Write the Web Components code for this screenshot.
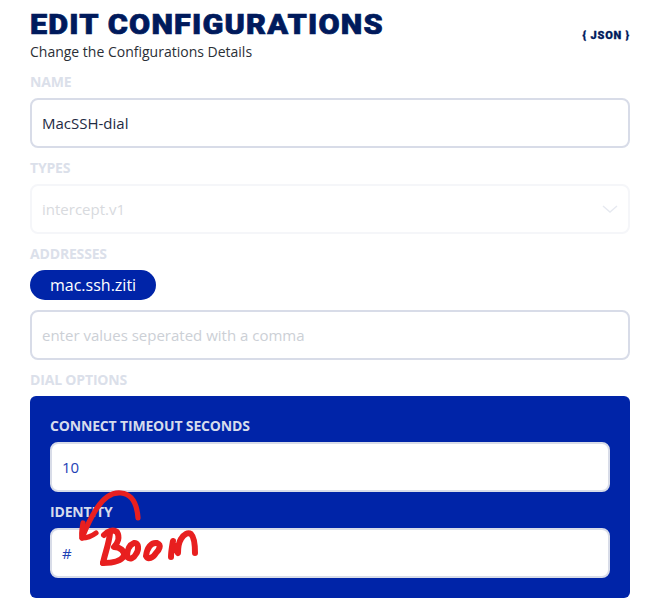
<!DOCTYPE html>
<html><head><meta charset="utf-8"><style>
html,body{margin:0;background:#fff}
body{font-family:"Open Sans",sans-serif}
</style></head><body>
<edit-config></edit-config>
<script>
const base=':host{display:block;box-sizing:border-box}*{box-sizing:border-box}';
class FieldLabel extends HTMLElement{constructor(){super();this.attachShadow({mode:'open'}).innerHTML=`<style>${base}:host{font:700 14px/20px "Open Sans",sans-serif;letter-spacing:-.17px;color:var(--label,#dbe0ea);text-transform:uppercase;margin-bottom:6px}</style><slot></slot>`}}
class TextBox extends HTMLElement{constructor(){super();this.attachShadow({mode:'open'}).innerHTML=`<style>${base}:host{height:50px;border:2px solid #d8dce8;border-radius:8px;background:#fff;font:400 15px/46px "Open Sans",sans-serif;color:var(--ink,#1e2a44);padding:0 10px;display:flex;align-items:center;justify-content:space-between}:host([placeholder]){color:#ccd0d6}:host([disabled]){border-color:#f5f6f9;color:#d8dade}svg{display:block}</style><slot></slot>`}}
class AddrChip extends HTMLElement{constructor(){super();this.attachShadow({mode:'open'}).innerHTML=`<style>${base}:host{display:inline-block;height:30px;border-radius:15px;background:#0024a8;color:#fff;font:500 16px/30px "Open Sans",sans-serif;padding:0 20px}</style><slot></slot>`}}
class DialPanel extends HTMLElement{constructor(){super();this.attachShadow({mode:'open'}).innerHTML=`<style>${base}:host{background:#0024a8;border-radius:6px;padding:20px;display:flex;flex-direction:column;gap:10px;--label:#d6dcec;--ink:#1e3fb5}</style><slot></slot>`}}
class FormField extends HTMLElement{constructor(){super();this.attachShadow({mode:'open'}).innerHTML=`<style>${base}</style><slot></slot>`}}
class EditConfig extends HTMLElement{constructor(){super();this.attachShadow({mode:'open'}).innerHTML=`<style>${base}
:host{position:relative;width:655px;height:608px;padding:10px 25px 0 30px;overflow:hidden}
header{display:flex;justify-content:space-between;align-items:flex-start;height:62px}
h1{margin:0;font:900 28.5px/30px Roboto,sans-serif;letter-spacing:1.1px;color:#001a5c;-webkit-text-stroke:.7px #001a5c;transform:scaleX(1.075);transform-origin:0 50%;white-space:nowrap;width:330px}
p{margin:2px 0 0;font:400 14px/20px "Open Sans",sans-serif;color:#2b2f36}
.json{font:900 11px/14px Roboto,sans-serif;letter-spacing:.8px;color:#001a5c;-webkit-text-stroke:.3px #001a5c;margin:19px 0 0;white-space:pre}
.form{display:flex;flex-direction:column;gap:10px;width:600px}
.addr{display:flex;flex-direction:column;align-items:flex-start}
.addr text-box{align-self:stretch;margin-top:10px}
.doodle{position:absolute;left:0;top:0;pointer-events:none}
</style>
<header><div><h1>EDIT CONFIGURATIONS</h1><p>Change the Configurations Details</p></div><div class="json">{ JSON }</div></header>
<div class="form">
<form-field><field-label>Name</field-label><text-box>MacSSH-dial</text-box></form-field>
<form-field><field-label>Types</field-label><text-box disabled>intercept.v1<svg width="16" height="9" viewBox="0 0 16 9"><path d="M1 1l7 6 7-6" fill="none" stroke="#e6e9f0" stroke-width="1.4"/></svg></text-box></form-field>
<form-field><div class="addr"><field-label>Addresses</field-label><addr-chip>mac.ssh.ziti</addr-chip><text-box placeholder>enter values seperated with a comma</text-box></div></form-field>
<form-field><field-label>Dial Options</field-label>
<dial-panel>
<form-field><field-label>Connect Timeout Seconds</field-label><text-box>10</text-box></form-field>
<form-field><field-label>Identity</field-label><text-box>#</text-box></form-field>
</dial-panel></form-field>
</div>
<svg class="doodle" width="655" height="608" viewBox="0 0 655 608" fill="none" stroke="#e81f1f" stroke-width="6" stroke-linecap="round" stroke-linejoin="round">
<path stroke-width="5.2" d="M138 518C137 504 132 494 121 493 111 492 103 499 97 508 91 517 86 528 82 538"/>
<path stroke-width="5.2" d="M83 523C82 529 81 534 82 538 87 538 92 536 96 533"/>
<path d="M110 533C109 544 105 553 103 563"/>
<path d="M104 535C108 531 113 529 117 532 120 537 118 543 114 547 120 547 125 551 124 556 121 561 112 563 103 563"/>
<path d="M134 543C129 545 127 551 127 557 130 560 134 558 136 554 139 550 139 542 134 543Z"/>
<path d="M157 543C151 542 147 548 146 556 148 560 153 558 156 553 159 550 162 545 157 543Z"/>
<path d="M173 541C172 547 171 552 171 557M173 544C175 547 176 550 178 553 178 547 179 542 181 539 184 534 188 532 191 534 195 538 195 547 195 553"/>
</svg>`}}
for(const [n,c] of [['field-label',FieldLabel],['text-box',TextBox],['addr-chip',AddrChip],['dial-panel',DialPanel],['form-field',FormField],['edit-config',EditConfig]])customElements.define(n,c);
</script></body></html>
